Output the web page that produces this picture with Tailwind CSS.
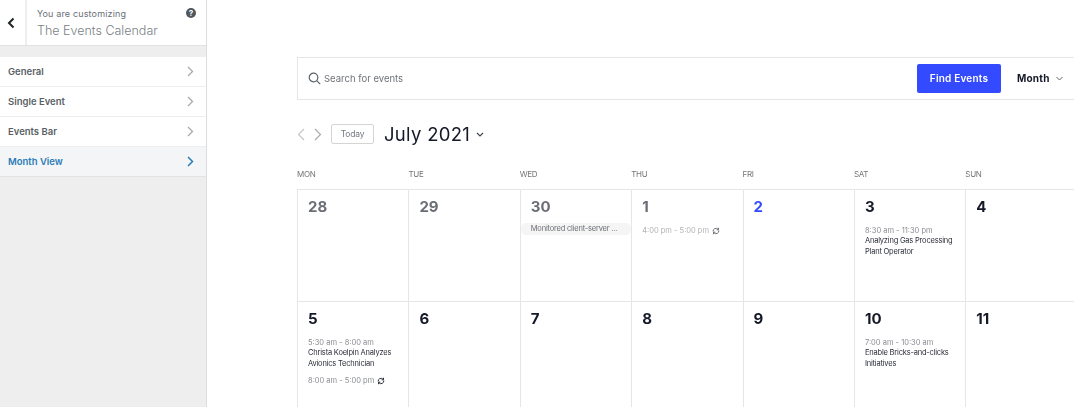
<!DOCTYPE html>
<html lang="en">
<head>
    <meta charset="UTF-8">
    <meta name="viewport" content="width=device-width, initial-scale=1.0">
    <title>The Events Calendar</title>
    <script src="https://cdn.jsdelivr.net/npm/@tailwindcss/browser@4"></script>
</head>
<body class="bg-white font-['Inter',sans-serif] overflow-hidden">
<div class="flex h-[407px] w-[1074px] overflow-hidden blur-[0.35px]">
    <!-- customizer sidebar -->
    <aside class="w-[207px] shrink-0 bg-[#eeeeee] border-r border-[#dcdcde]">
        <div class="flex h-[46px] bg-white border-b border-[#e2e2e3]">
            <div class="w-[27px] pr-[4px] flex items-center justify-center border-r-2 border-[#eeeeee]">
                <svg width="8" height="12" viewBox="0 0 8 12" fill="none" stroke="#1d2327" stroke-width="2"><path d="M6.5 1.500 2 6l4.500 4.500"/></svg>
            </div>
            <div class="flex-1 pl-[10px] pt-[7px] relative">
                <p class="text-[9px] leading-[13px] text-[#6b7077] tracking-[0.15px]">You are customizing</p>
                <p class="text-[12.500px] leading-[18px] mt-[2px] text-[#7a7f85] font-light">The Events Calendar</p>
                <svg class="absolute right-[10px] top-[8px]" width="10" height="10" viewBox="0 0 10 10"><circle cx="5" cy="5" r="5" fill="#50575e"/><text x="5" y="8" text-anchor="middle" font-size="8" font-weight="700" fill="#fff" font-family="Inter">?</text></svg>
            </div>
        </div>
        <nav class="mt-[11px] flex flex-col gap-px">
            <div class="h-[29px] bg-white flex items-center justify-between pl-[8px] pr-[12px] text-[9.500px] font-semibold text-[#5a5f65]"><span class="pt-[2px]">General</span>
                <svg width="7" height="11" viewBox="0 0 7 11" fill="none" stroke="#a7aaad" stroke-width="1.300"><path d="m1 1 4.500 4.500L1 10"/></svg>
            </div>
            <div class="h-[29px] bg-white flex items-center justify-between pl-[8px] pr-[12px] text-[9.500px] font-semibold text-[#5a5f65]"><span class="pt-[2px]">Single Event</span>
                <svg width="7" height="11" viewBox="0 0 7 11" fill="none" stroke="#a7aaad" stroke-width="1.300"><path d="m1 1 4.500 4.500L1 10"/></svg>
            </div>
            <div class="h-[29px] bg-white flex items-center justify-between pl-[8px] pr-[12px] text-[9.500px] font-semibold text-[#5a5f65]"><span class="pt-[2px]">Events Bar</span>
                <svg width="7" height="11" viewBox="0 0 7 11" fill="none" stroke="#a7aaad" stroke-width="1.300"><path d="m1 1 4.500 4.500L1 10"/></svg>
            </div>
            <div class="h-[29px] bg-[#f4f5f6] border-b border-[#e2e3e4] box-content flex items-center justify-between pl-[8px] pr-[12px] text-[9.500px] font-semibold text-[#2b7cb8]"><span class="pt-[2px]">Month View</span>
                <svg width="7" height="11" viewBox="0 0 7 11" fill="none" stroke="#2b7cb8" stroke-width="1.500"><path d="m1 1 4.500 4.500L1 10"/></svg>
            </div>
        </nav>
    </aside>

    <!-- calendar -->
    <main class="pl-[90px] pt-[57px] w-[867px] shrink-0">
        <div class="w-[800px] h-[43px] border border-[#e6e6e6] flex items-center pl-[10px]">
            <svg class="shrink-0" width="13" height="13" viewBox="0 0 13 13" fill="none" stroke="#5f646b" stroke-width="1.200"><circle cx="5.500" cy="5.500" r="4.300"/><path d="m8.700 8.700 3.500 3.500"/></svg>
            <span class="ml-[3px] pt-[2px] w-[76px] shrink-0 whitespace-nowrap text-[9.500px] text-[#6f7379]">Search for events</span>
            <div class="ml-[517px] w-[84px] h-[29px] bg-[#334aff] rounded-[2px] flex items-center justify-center text-[10px] font-semibold text-white tracking-[0.2px] shrink-0">Find Events</div>
            <span class="ml-[16px] text-[10px] font-bold text-[#141827] tracking-[0.2px] shrink-0">Month</span>
            <svg class="ml-[6px] shrink-0" width="7" height="5" viewBox="0 0 7 5" fill="none" stroke="#5f646b" stroke-width="1"><path d="m.5 1 3 3 3-3"/></svg>
        </div>

        <div class="flex items-center h-[24px] mt-[22px]">
            <svg width="8" height="13" viewBox="0 0 8 13" fill="none" stroke="#c4c6c9" stroke-width="1.200"><path d="M7 1 1.500 6.500 7 12"/></svg>
            <svg class="ml-[9px]" width="8" height="13" viewBox="0 0 8 13" fill="none" stroke="#a9acb0" stroke-width="1.200"><path d="m1 1 5.500 5.500L1 12"/></svg>
            <div class="ml-[9px] w-[43px] h-[20px] border border-[#d5d5d5] rounded-[2px] flex items-center justify-center text-[8.500px] text-[#737880] tracking-[-0.2px]">Today</div>
            <span class="ml-[10px] text-[18.500px] leading-[24px] text-[#141827] tracking-[0.3px]">July 2021</span>
            <svg class="ml-[6px]" width="8" height="5" viewBox="0 0 8 5" fill="none" stroke="#3c4048" stroke-width="1.100"><path d="m1 1 3 3 3-3"/></svg>
        </div>

        <div class="grid grid-cols-[repeat(7,111.400px)] w-[781px] mt-[23px] h-[21px] text-[8px] tracking-[-0.3px] text-[#757575] border-b border-[#e6e6e6]">
            <span class="leading-[10px]">MON</span><span class="leading-[10px]">TUE</span><span class="leading-[10px]">WED</span><span class="leading-[10px]">THU</span><span class="leading-[10px]">FRI</span><span class="leading-[10px]">SAT</span><span class="leading-[10px]">SUN</span>
        </div>

        <div class="grid grid-cols-[repeat(7,111.400px)] grid-rows-[112px_112px] w-[781px] text-[#141827]">
            <div class="border-l border-b border-[#e6e6e6] pl-[10px] pt-[7px]">
                <p class="text-[15px] leading-[20px] font-bold text-[#6b6e76]">28</p>
            </div>
            <div class="border-l border-b border-[#e6e6e6] pl-[10px] pt-[7px]">
                <p class="text-[15px] leading-[20px] font-bold text-[#6b6e76]">29</p>
            </div>
            <div class="border-l border-b border-[#e6e6e6] pt-[7px]">
                <p class="pl-[10px] text-[15px] leading-[20px] font-bold text-[#6b6e76]">30</p>
                <div class="mt-[6px] h-[12px] rounded-[5px] bg-[#f5f5f5] pl-[10px] text-[7.500px] tracking-[-0.2px] leading-[12px] text-[#6b6e76]">Monitored client-server ...</div>
            </div>
            <div class="border-l border-b border-[#e6e6e6] pl-[10px] pt-[7px]">
                <p class="text-[15px] leading-[20px] font-bold text-[#6b6e76]">1</p>
                <p class="mt-[8px] flex items-center text-[7.500px] leading-[11px] text-[#b0b2b6]">4:00 pm - 5:00 pm
                    <svg class="ml-[3px]" width="8" height="8" viewBox="0 0 8 8" fill="none" stroke="#6b6e76" stroke-width="1"><path d="M1.200 4.500A2.800 2.800 0 0 1 6 2.200"/><path d="M6.800 3.500A2.800 2.800 0 0 1 2 5.800"/><path d="M6.500.8v2H4.600M1.500 7.200v-2h1.900"/></svg>
                </p>
            </div>
            <div class="border-l border-b border-[#e6e6e6] pl-[10px] pt-[7px]">
                <p class="text-[15px] leading-[20px] font-bold text-[#334aff]">2</p>
            </div>
            <div class="border-l border-b border-[#e6e6e6] pl-[10px] pt-[7px]">
                <p class="text-[15px] leading-[20px] font-bold">3</p>
                <p class="mt-[8px] text-[7.500px] leading-[11px] text-[#8a8c91]">8:30 am - 11:30 pm</p>
                <p class="text-[7.500px] leading-[10.500px] text-[#2b2e38] tracking-[-0.2px]">Analyzing Gas Processing<br>Plant Operator</p>
            </div>
            <div class="border-l border-b border-[#e6e6e6] pl-[10px] pt-[7px]">
                <p class="text-[15px] leading-[20px] font-bold">4</p>
            </div>

            <div class="border-l border-[#e6e6e6] pl-[10px] pt-[7px]">
                <p class="text-[15px] leading-[20px] font-bold">5</p>
                <p class="mt-[8px] text-[7.500px] leading-[11px] text-[#8a8c91]">5:30 am - 8:00 am</p>
                <p class="text-[7.500px] leading-[10.500px] text-[#2b2e38] tracking-[-0.2px]">Christa Koelpin Analyzes<br>Avionics Technician</p>
                <p class="mt-[6px] flex items-center text-[7.500px] leading-[11px] text-[#8a8c91]">8:00 am - 5:00 pm
                    <svg class="ml-[3px]" width="8" height="8" viewBox="0 0 8 8" fill="none" stroke="#2b2e38" stroke-width="1"><path d="M1.200 4.500A2.800 2.800 0 0 1 6 2.200"/><path d="M6.800 3.500A2.800 2.800 0 0 1 2 5.800"/><path d="M6.500.8v2H4.600M1.500 7.200v-2h1.900"/></svg>
                </p>
            </div>
            <div class="border-l border-[#e6e6e6] pl-[10px] pt-[7px]">
                <p class="text-[15px] leading-[20px] font-bold">6</p>
            </div>
            <div class="border-l border-[#e6e6e6] pl-[10px] pt-[7px]">
                <p class="text-[15px] leading-[20px] font-bold">7</p>
            </div>
            <div class="border-l border-[#e6e6e6] pl-[10px] pt-[7px]">
                <p class="text-[15px] leading-[20px] font-bold">8</p>
            </div>
            <div class="border-l border-[#e6e6e6] pl-[10px] pt-[7px]">
                <p class="text-[15px] leading-[20px] font-bold">9</p>
            </div>
            <div class="border-l border-[#e6e6e6] pl-[10px] pt-[7px]">
                <p class="text-[15px] leading-[20px] font-bold">10</p>
                <p class="mt-[8px] text-[7.500px] leading-[11px] text-[#8a8c91]">7:00 am - 10:30 am</p>
                <p class="text-[7.500px] leading-[10.500px] text-[#2b2e38] tracking-[-0.2px]">Enable Bricks-and-clicks<br>Initiatives</p>
            </div>
            <div class="border-l border-[#e6e6e6] pl-[10px] pt-[7px]">
                <p class="text-[15px] leading-[20px] font-bold">11</p>
            </div>
        </div>
    </main>
</div>
</body>
</html>
